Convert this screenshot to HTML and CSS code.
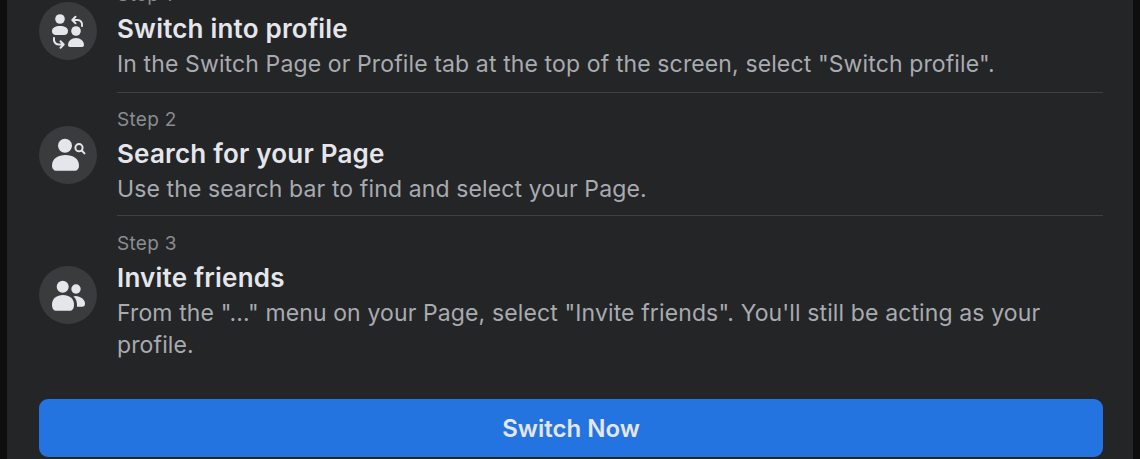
FILE: index.html
```html
<!DOCTYPE html>
<html lang="en">
<head>
    <meta charset="UTF-8">
    <meta name="viewport" content="width=device-width, initial-scale=1.0">
    <title>Switch Now</title>
    <link rel="stylesheet" href="styles.css">
</head>
<body>
    <div class="panel">
        <div class="step">
            <div class="step-icon">
                <svg viewBox="0 0 58 58" width="58" height="58">
                    <circle cx="21" cy="17" r="4.800"/>
                    <path d="M13 29c0-3.500 3.500-5 8-5s8 1.500 8 5c0 2.500-1.500 4-4 4h-8c-2.500 0-4-1.500-4-4z"/>
                    <circle cx="37" cy="29" r="4.800"/>
                    <path d="M29 43c0-4 3.500-7 8-7s8 3 8 7c0 1.200-.8 2-2 2H31c-1.200 0-2-.8-2-2z"/>
                    <path class="arrow" d="M43 24c.6-3.500-1.500-6-4.500-6H33.500M36.500 14.800 33.300 18l3.200 3.200"/>
                    <path class="arrow" d="M15 36c-.6 3.800 1.500 6.500 4.500 6.500H24.500M21.500 39.300 24.700 42.500l-3.200 3.200"/>
                </svg>
            </div>
            <div class="step-text">
                <div class="step-num">Step 1</div>
                <div class="step-title">Switch into profile</div>
                <div class="step-desc">In the Switch Page or Profile tab at the top of the screen, select "Switch profile".</div>
            </div>
        </div>
        <div class="step">
            <div class="step-icon">
                <svg viewBox="0 0 58 58" width="58" height="58">
                    <circle cx="26" cy="19.700" r="7"/>
                    <path d="M13 39.500c0-7 6-10.500 13.500-10.500S40 32.500 40 39.500c0 3.200-1.800 5.300-4.500 5.300h-18c-2.700 0-4.500-2.100-4.500-5.300z"/>
                    <circle class="lens" cx="40" cy="21.700" r="3.600"/>
                    <path class="arrow" d="m42.700 24.500 2.800 2.900"/>
                </svg>
            </div>
            <div class="step-text">
                <div class="step-num">Step 2</div>
                <div class="step-title">Search for your Page</div>
                <div class="step-desc">Use the search bar to find and select your Page.</div>
            </div>
        </div>
        <div class="step">
            <div class="step-icon">
                <svg viewBox="0 0 58 58" width="58" height="58">
                    <circle cx="23.700" cy="20.700" r="6"/>
                    <circle cx="37" cy="23" r="4.700"/>
                    <path d="M36.500 30c5 .3 9.500 3.500 9.500 7.500 0 2.200-1 3.300-3 3.300h-5c.2-4-.5-7.800-3.500-10.300z"/>
                    <path d="M13 38.500c0-6 4.800-9.500 11-9.500s11 3.500 11 9.500c0 4-1.500 6.300-4.500 6.300h-13c-3 0-4.500-2.300-4.500-6.300z"/>
                </svg>
            </div>
            <div class="step-text">
                <div class="step-num">Step 3</div>
                <div class="step-title">Invite friends</div>
                <div class="step-desc">From the "..." menu on your Page, select "Invite friends". You'll still be acting as your profile.</div>
            </div>
        </div>
        <button class="switch-btn">Switch Now</button>
    </div>
</body>
</html>
```

FILE: styles.css
```css
body {
    margin: 0;
    padding: 0 7px;
    background-color: #0e0e0f;
    font-family: Inter, "Liberation Sans", sans-serif;
    overflow: hidden;
}
.panel {
    background-color: #242526;
    margin-top: -32px;
    padding: 0 30px 2px 32px;
}
.step {
    display: flex;
    align-items: center;
    gap: 20px;
}
.step-icon {
    flex: 0 0 58px;
    width: 58px;
    height: 58px;
    border-radius: 50%;
    background-color: #3a3b3c;
}
.step-icon svg {
    display: block;
    fill: #e4e6eb;
}
.step-icon .arrow {
    fill: none;
    stroke: #e4e6eb;
    stroke-width: 2;
    stroke-linecap: round;
    stroke-linejoin: round;
}
.step-icon .lens {
    fill: none;
    stroke: #e4e6eb;
    stroke-width: 2;
}
.step-text {
    flex: 1;
    padding: 15px 0 10px;
    border-bottom: 1px solid #3e4042;
}
.step:first-child .step-text {
    padding-bottom: 12px;
}
.step:last-of-type .step-text {
    border-bottom: none;
    padding: 16px 0 13px;
}
.step-num {
    font-size: 19px;
    line-height: 24px;
    margin-bottom: 3px;
    letter-spacing: 0.3px;
    color: #8a8d91;
}
.step-title {
    font-size: 26px;
    line-height: 38px;
    font-weight: 600;
    letter-spacing: 0.2px;
    color: #e4e6eb;
}
.step-desc {
    font-size: 23px;
    line-height: 32px;
    letter-spacing: 0.12px;
    color: #a8abaf;
}
.switch-btn {
    display: block;
    width: 100%;
    height: 58px;
    margin-top: 25px;
    border: none;
    border-radius: 9px;
    background-color: #2374e1;
    color: #e4e6eb;
    font-family: inherit;
    font-size: 24px;
    font-weight: 600;
}
```
